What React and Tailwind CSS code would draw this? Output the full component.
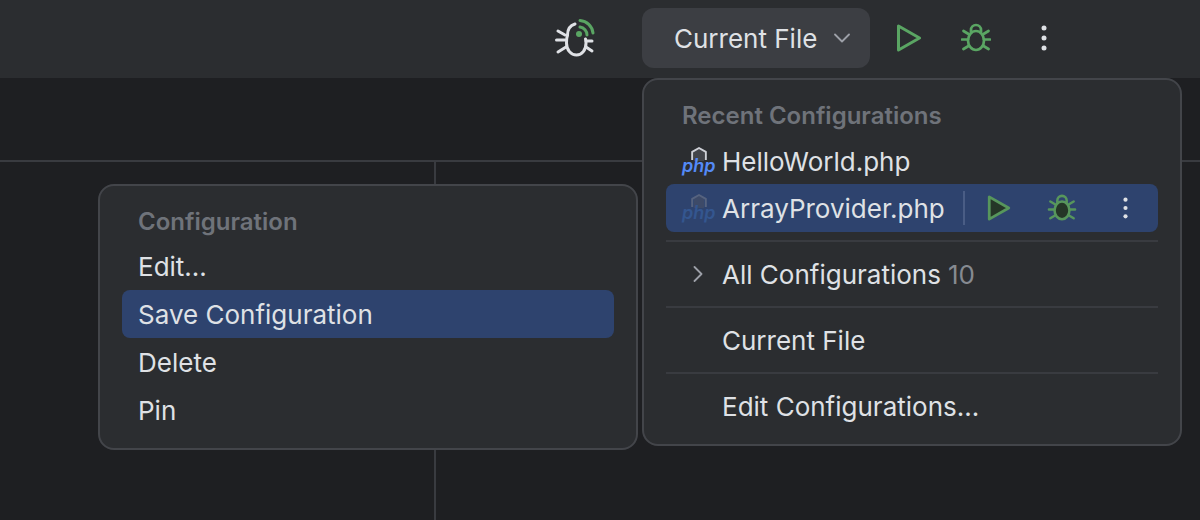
import React from "react";

const font = { fontFamily: "Inter, sans-serif" };

// debug bug used in the toolbar and in the hovered row
const BugIcon = ({ className, fill = "none", stroke = "#5aa563" }) => (
  <svg viewBox="0 0 30 30" className={className} fill="none" stroke={stroke} strokeWidth="2.700" strokeLinecap="round">
    <path d="M10 9V7a5 5 0 0 1 10 0v2" />
    <ellipse cx="15" cy="17.500" rx="8" ry="9.500" fill={fill} />
    <path d="M1 16.500H7M23 16.500H29M7.500 11L2.500 8M22.500 11L27.500 8M7.500 23L2.500 26M22.500 23L27.500 26" />
  </svg>
);

const PlayIcon = ({ className, fill = "none", stroke = "#5aa563" }) => (
  <svg viewBox="0 0 24 28" className={className} fill={fill} stroke={stroke} strokeWidth="3" strokeLinejoin="round">
    <path d="M1.500 2V26L22.500 14Z" />
  </svg>
);

const Dots = ({ className }) => (
  <svg viewBox="0 0 6 26" className={className} fill="#dfe1e5">
    <circle cx="3" cy="3" r="2.500" />
    <circle cx="3" cy="13" r="2.500" />
    <circle cx="3" cy="23" r="2.500" />
  </svg>
);

const PhpIcon = ({ dim }) => (
  <span className="relative w-8 h-8 shrink-0 block">
    <svg viewBox="0 0 16 14" className="absolute left-[9px] top-[2px] w-4 h-[14px]" fill="none">
      <path d="M3 3.500V14H13V3.500L8 2Z" fill={dim ? "#3d4a68" : "#43454a"} />
      <path d="M1.200 13V4.800L8 1L14.800 4.800V13" stroke={dim ? "#56637f" : "#ced0d6"} strokeWidth="2" strokeLinejoin="round" />
    </svg>
    <span className={`absolute left-0 top-[11px] text-[18px] leading-5 font-semibold italic ${dim ? "text-[#34568f]" : "text-[#548af7]"}`}>
      php
    </span>
  </span>
);

const Separator = () => <div className="h-[2px] bg-[#393b40]" />;

export default function App() {
  return (
    <div style={font} className="relative w-[1200px] h-[520px] overflow-hidden bg-[#1e1f22] text-[#dfe1e5] text-[26px]">
      {/* toolbar */}
      <div className="h-[78px] pb-[2px] bg-[#2b2d30] flex items-center">
        <svg viewBox="0 0 40 38" className="ml-[555px] w-[40px] h-[38px]" fill="none" stroke="#dfe1e5" strokeWidth="3" strokeLinecap="round">
          <path d="M12.500 16C12.500 10 15 6.500 20 5" />
          <path d="M12.500 16C11.500 19 11.500 22 11.500 24C11.500 31 16 36 21.500 36C27 36 31 31 31 24C31 23 31 21.500 30.500 20" />
          <path d="M1.500 21H10M3 12L10 16M3 33L11 28M31 22H37M31 28L37 32" />
          <circle cx="24" cy="15" r="3" fill="#5aa563" stroke="none" />
          <path d="M25 8A8 8 0 0 1 32 16M25 1.500A14 14 0 0 1 38 14" stroke="#5aa563" />
        </svg>
        <button className="ml-[47px] w-[228px] h-[60px] rounded-[12px] bg-[#3c3e43] flex items-center pl-[32px]">
          <span>Current File</span>
          <svg viewBox="0 0 16 10" className="ml-[17px] w-4 h-[10px]" fill="none" stroke="#9da0a8" strokeWidth="1.800" strokeLinecap="round" strokeLinejoin="round">
            <path d="M1 1.500L8 8.500L15 1.500" />
          </svg>
        </button>
        <PlayIcon className="ml-[27px] w-[24px] h-[28px]" />
        <BugIcon className="ml-[40px] w-[30px] h-[30px]" />
        <Dots className="ml-[50px] w-[6px] h-[26px]" />
      </div>

      {/* editor splitters behind the popups */}
      <div className="h-[84px] border-b-2 border-[#393b40]" />
      <div className="w-[436px] h-[360px] border-r-2 border-[#393b40]" />

      {/* context menu */}
      <div className="absolute left-[98px] top-[184px] w-[540px] h-[266px] rounded-[16px] border-2 border-[#43454a] bg-[#2b2d30] px-[22px] pt-[12px]">
        <div className="h-[45px] pl-4 pt-[2px] flex items-center font-semibold text-[#6f737a] text-[24px]">Configuration</div>
        <div className="h-[47px] pl-4 flex items-center">Edit...</div>
        <div className="h-[48px] pl-4 flex items-center rounded-[8px] bg-[#2e436e]">Save Configuration</div>
        <div className="h-[48px] pl-4 flex items-center">Delete</div>
        <div className="h-[48px] pl-4 flex items-center">Pin</div>
      </div>

      {/* run configurations popup */}
      <div className="absolute left-[642px] top-[78px] w-[540px] h-[368px] rounded-[16px] border-2 border-[#43454a] bg-[#2b2d30] px-[22px] pt-[12px]">
        <div className="h-[46px] pl-4 pt-[2px] flex items-center font-semibold text-[#6f737a] text-[24px]">Recent Configurations</div>
        <div className="h-[46px] pl-4 flex items-center gap-2">
          <PhpIcon />
          <span>HelloWorld.php</span>
        </div>
        <div className="h-[48px] pl-4 flex items-center gap-2 rounded-[8px] bg-[#2e436e]">
          <PhpIcon dim />
          <span>ArrayProvider.php</span>
          <div className="ml-auto w-[195px] flex items-center">
            <div className="w-[2px] h-[34px] bg-[#4a5d85]" />
            <PlayIcon fill="#253627" stroke="#57965c" className="ml-[22px] w-[24px] h-[26px]" />
            <BugIcon fill="#253627" stroke="#57965c" className="ml-[36px] w-[30px] h-[28px]" />
            <Dots className="ml-[46px] w-[5px] h-[26px]" />
          </div>
        </div>
        <div className="h-2" />
        <Separator />
        <div className="h-[64px] pl-4 flex items-center">
          <svg viewBox="0 0 10 16" className="ml-[11px] w-[10px] h-4" fill="none" stroke="#9da0a8" strokeWidth="1.800" strokeLinecap="round" strokeLinejoin="round">
            <path d="M1.500 1L8.500 8L1.500 15" />
          </svg>
          <span className="ml-[19px]">All Configurations</span>
          <span className="ml-[7px] text-[#868a91]">10</span>
        </div>
        <Separator />
        <div className="h-[64px] pl-[56px] flex items-center">Current File</div>
        <Separator />
        <div className="h-[64px] pl-[56px] flex items-center">Edit Configurations...</div>
      </div>
    </div>
  );
}
